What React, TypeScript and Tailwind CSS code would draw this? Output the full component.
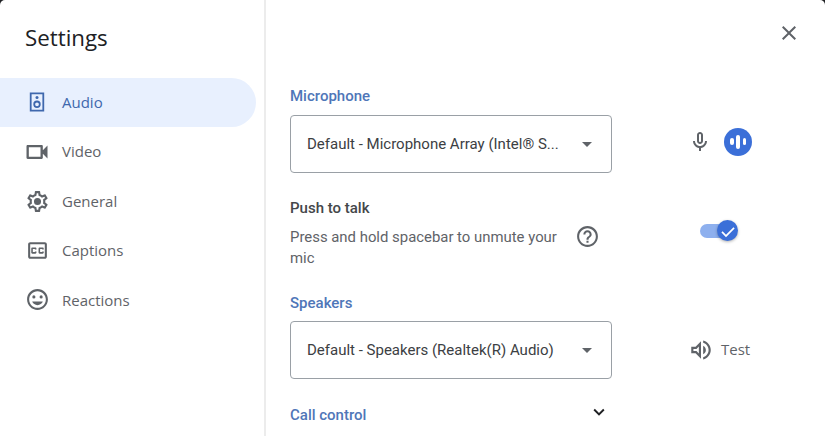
import type { ReactNode } from 'react'

// Material icon wrapper
function Icon({ size = 24, className = '', children }: { size?: number; className?: string; children: ReactNode }) {
  return (
    <svg width={size} height={size} viewBox="0 0 24 24" fill="currentColor" className={`shrink-0 ${className}`}>
      {children}
    </svg>
  )
}

const navItems = [
  {
    label: 'Audio',
    active: true,
    size: 24,
    icon: (
      <>
        <path d="M19.2 2.5H4.8v19h14.4v-19zm-1.8 17.2H6.6V4.3h10.8v15.4z" />
        <circle cx="12" cy="7.4" r="1.5" />
        <path d="M12 10.6a3.7 3.7 0 1 0 0 7.4 3.7 3.7 0 0 0 0-7.4zm0 5.6a1.9 1.9 0 1 1 0-3.8 1.9 1.9 0 0 1 0 3.8z" />
      </>
    ),
  },
  {
    label: 'Video',
    size: 28,
    icon: <path d="M15 8v8H5V8h10m1-2H4c-.55 0-1 .45-1 1v10c0 .55.45 1 1 1h12c.55 0 1-.45 1-1v-3.5l4 4v-11l-4 4V7c0-.55-.45-1-1-1z" />,
  },
  {
    label: 'General',
    size: 25,
    icon: <path d="M19.43 12.98c.04-.32.07-.64.07-.98 0-.34-.03-.66-.07-.98l2.11-1.65c.19-.15.24-.42.12-.64l-2-3.46c-.09-.16-.26-.25-.44-.25-.06 0-.12.01-.17.03l-2.49 1c-.52-.4-1.08-.73-1.69-.98l-.38-2.65C14.46 2.18 14.25 2 14 2h-4c-.25 0-.46.18-.49.42l-.38 2.65c-.61.25-1.17.59-1.69.98l-2.49-1c-.06-.02-.12-.03-.18-.03-.17 0-.34.09-.43.25l-2 3.46c-.13.22-.07.49.12.64l2.11 1.65c-.04.32-.07.65-.07.98 0 .33.03.66.07.98l-2.11 1.65c-.19.15-.24.42-.12.64l2 3.46c.09.16.26.25.44.25.06 0 .12-.01.17-.03l2.49-1c.52.4 1.08.73 1.69.98l.38 2.65c.03.24.24.42.49.42h4c.25 0 .46-.18.49-.42l.38-2.65c.61-.25 1.17-.59 1.69-.98l2.49 1c.06.02.12.03.18.03.17 0 .34-.09.43-.25l2-3.46c.12-.22.07-.49-.12-.64l-2.11-1.65zm-1.98-1.71c.04.31.05.52.05.73 0 .21-.02.43-.05.73l-.14 1.13.89.7 1.08.84-.7 1.21-1.27-.51-1.04-.42-.9.68c-.43.32-.84.56-1.25.73l-1.06.43-.16 1.13-.2 1.35h-1.4l-.19-1.35-.16-1.13-1.06-.43c-.43-.18-.83-.41-1.23-.71l-.91-.7-1.06.43-1.27.51-.7-1.21 1.08-.84.89-.7-.14-1.13c-.03-.31-.05-.54-.05-.74s.02-.43.05-.73l.14-1.13-.89-.7-1.08-.84.7-1.21 1.27.51 1.04.42.9-.68c.43-.32.84-.56 1.25-.73l1.06-.43.16-1.13.2-1.35h1.39l.19 1.35.16 1.13 1.06.43c.43.18.83.41 1.23.71l.91.7 1.06-.43 1.27-.51.7 1.21-1.07.85-.89.7.14 1.13zM12 8.6a3.4 3.4 0 1 0 0 6.8 3.4 3.4 0 0 0 0-6.8z" />,
  },
  {
    label: 'Captions',
    size: 25,
    icon: <path d="M19 4H5c-1.11 0-2 .9-2 2v12c0 1.1.89 2 2 2h14c1.1 0 2-.9 2-2V6c0-1.1-.9-2-2-2zm0 14H5V6h14v12zM7 15h3c.55 0 1-.45 1-1v-1H9.5v.5h-2v-3h2v.5H11v-1c0-.55-.45-1-1-1H7c-.55 0-1 .45-1 1v4c0 .55.45 1 1 1zm7 0h3c.55 0 1-.45 1-1v-1h-1.5v.5h-2v-3h2v.5H18v-1c0-.55-.45-1-1-1h-3c-.55 0-1 .45-1 1v4c0 .55.45 1 1 1z" />,
  },
  {
    label: 'Reactions',
    size: 25,
    icon: (
      <>
        <path d="M11.99 2C6.47 2 2 6.48 2 12s4.47 10 9.99 10C17.52 22 22 17.52 22 12S17.52 2 11.99 2zM12 20c-4.42 0-8-3.58-8-8s3.58-8 8-8 8 3.58 8 8-3.58 8-8 8z" />
        <circle cx="15.5" cy="9.5" r="1.5" />
        <circle cx="8.5" cy="9.5" r="1.5" />
        <path d="M12 17.5c2.33 0 4.31-1.46 5.11-3.5H6.89c.8 2.04 2.78 3.5 5.11 3.5z" />
      </>
    ),
  },
]

function Select({ value }: { value: string }) {
  return (
    <div className="flex h-[58px] w-[322px] shrink-0 items-center justify-between rounded-[4px] border border-[#9aa0a6] pl-[16px] pr-[19px]">
      <span className="whitespace-nowrap text-[15px] text-[#3c4043]">{value}</span>
      <span className="h-0 w-0 border-x-[5.5px] border-t-[5px] border-x-transparent border-t-[#5f6368]" />
    </div>
  )
}

export default function App() {
  return (
    <div className="h-[436px] w-[825px] overflow-hidden bg-[#202124]">
      <div className="flex h-full w-full overflow-hidden rounded-t-[5px] bg-white font-['Roboto',sans-serif]">
        {/* 왼쪽 메뉴 */}
        <aside className="h-full w-[266px] shrink-0 border-r-2 border-[#ececec] pr-[8px]">
          <h1 className="pl-[25px] pt-[23px] font-['Open_Sans',sans-serif] text-[22.3px] leading-[30px] text-[#202124]">Settings</h1>
          <nav className="mt-[24.6px] flex flex-col">
            {navItems.map((item) => (
              <div
                key={item.label}
                className={`flex h-[49.4px] items-center gap-[12px] rounded-r-full pl-[24px] ${
                  item.active ? 'bg-[#e8f0fe] text-[#3f68ad]' : 'text-[#5f6368]'
                }`}
              >
                <span className="flex w-[26px] justify-center">
                  <Icon size={item.size}>{item.icon}</Icon>
                </span>
                <span className="font-['Open_Sans',sans-serif] text-[15px]">{item.label}</span>
              </div>
            ))}
          </nav>
        </aside>

        {/* 오른쪽 내용 */}
        <main className="flex-1 pl-[24px]">
          <div className="flex justify-end pr-[24px] pt-[21px]">
            <Icon className="text-[#5f6368]">
              <path d="M19 6.41 17.59 5 12 10.59 6.41 5 5 6.41 10.59 12 5 17.59 6.41 19 12 13.41 17.59 19 19 17.59 13.41 12z" />
            </Icon>
          </div>

          <h2 className="mt-[41px] text-[15px] font-medium leading-[20px] text-[#4f76b8]">Microphone</h2>
          <div className="mt-[9px] flex items-center">
            <Select value="Default - Microphone Array (Intel® S..." />
            <div className="mb-[5px] ml-[76px] flex items-center gap-[12px]">
              <Icon className="text-[#5f6368]">
                <path d="M12 14c1.66 0 3-1.34 3-3V5c0-1.66-1.34-3-3-3S9 3.34 9 5v6c0 1.66 1.34 3 3 3zm-1-9c0-.55.45-1 1-1s1 .45 1 1v6c0 .55-.45 1-1 1s-1-.45-1-1V5z" />
                <path d="M17 11c0 2.76-2.24 5-5 5s-5-2.24-5-5H5c0 3.53 2.61 6.43 6 6.92V21h2v-3.08c3.39-.49 6-3.39 6-6.92h-2z" />
              </Icon>
              <span className="flex h-[28px] w-[28px] items-center justify-center gap-[2.5px] rounded-full bg-[#3b6fd8]">
                <span className="h-[7px] w-[3.5px] rounded-full bg-white" />
                <span className="h-[14px] w-[4px] rounded-full bg-white" />
                <span className="h-[7px] w-[3.5px] rounded-full bg-white" />
              </span>
            </div>
          </div>

          <h2 className="mt-[25px] text-[15px] font-medium leading-[20px] text-[#44474a]">Push to talk</h2>
          <div className="mt-[9px] flex items-start">
            <p className="w-[275px] text-[14.9px] leading-[20.5px] text-[#5f6368]">Press and hold spacebar to unmute your mic</p>
            <Icon size={25} className="ml-[10px] mt-[-3px] text-[#5f6368]">
              <path d="M11 18h2v-2h-2v2zm1-16C6.48 2 2 6.48 2 12s4.48 10 10 10 10-4.48 10-10S17.52 2 12 2zm0 18c-4.41 0-8-3.59-8-8s3.59-8 8-8 8 3.59 8 8-3.59 8-8 8zm0-14c-2.21 0-4 1.79-4 4h2c0-1.1.9-2 2-2s2 .9 2 2c0 2-3 1.75-3 5h2c0-2.25 3-2.5 3-5 0-2.21-1.79-4-4-4z" />
            </Icon>
            <div className="ml-[100px] mt-[-7px] flex w-[38px] items-center">
              <span className="h-[14px] w-[24px] rounded-l-full bg-[#8eb0ee]" />
              <span className="-ml-[6px] flex h-[21px] w-[21px] shrink-0 items-center justify-center rounded-full bg-[#3b6fd8] shadow-[0_1px_3px_rgba(0,0,0,0.3)]">
                <svg width="16" height="16" viewBox="0 0 24 24" fill="white">
                  <path d="M9 17.6 3.9 12.5l-1.8 1.8L9 21.2 22 8.2l-1.8-1.8z" />
                </svg>
              </span>
            </div>
          </div>

          <h2 className="mt-[25px] text-[15px] font-medium leading-[20px] text-[#4f76b8]">Speakers</h2>
          <div className="mt-[8px] flex items-center">
            <Select value="Default - Speakers (Realtek(R) Audio)" />
            <div className="mb-[1px] ml-[76px] flex items-center gap-[7px] text-[#5f6368]">
              <Icon size={26}>
                <path d="M3 9v6h4l5 5V4L7 9H3zm7-.17v6.34L7.83 13H5v-2h2.83L10 8.83zM16.5 12c0-1.77-1.02-3.29-2.5-4.03v8.05c1.48-.73 2.5-2.25 2.5-4.02zM14 3.23v2.06c2.89.86 5 3.54 5 6.71s-2.11 5.85-5 6.71v2.06c4.01-.91 7-4.49 7-8.77 0-4.28-2.99-7.86-7-8.77z" />
              </Icon>
              <span className="font-['Open_Sans',sans-serif] text-[15px]">Test</span>
            </div>
          </div>

          <div className="mt-[25.5px] flex h-[20px] w-[322px] items-center justify-between">
            <h2 className="text-[15px] font-medium leading-[20px] text-[#4f76b8]">Call control</h2>
            <Icon size={20} className="-mt-[6px] mr-[3px] text-[#202124]">
              <path d="M7 8.2 12 13.2l5-5 1.6 1.6L12 16.4 5.4 9.8z" />
            </Icon>
          </div>
        </main>
      </div>
    </div>
  )
}
